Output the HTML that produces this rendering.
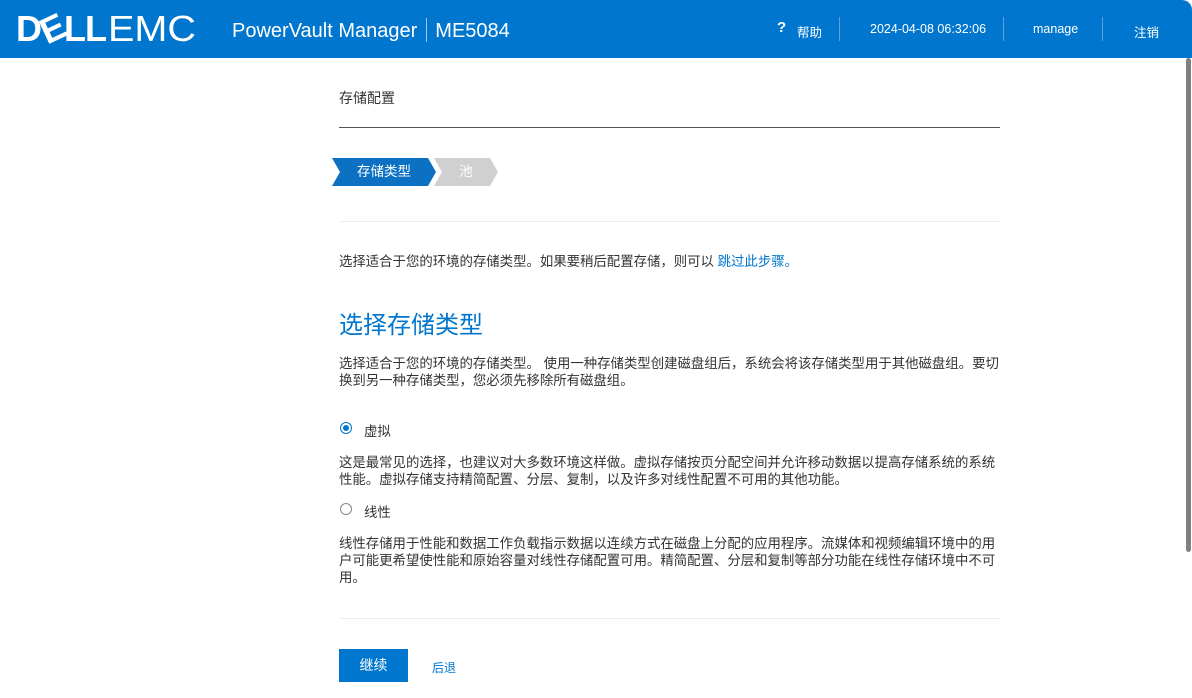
<!DOCTYPE html>
<html><head><meta charset="utf-8">
<style>
*{margin:0;padding:0;box-sizing:border-box}
body{width:1192px;height:698px;overflow:hidden;background:#fff;font-family:"Liberation Sans","Noto Sans CJK SC",sans-serif;color:#333;position:relative}
.hdr{position:absolute;left:0;top:0;width:1192px;height:58px;background:#0076ce;color:#fff;border-top-right-radius:10px}
.logo{position:absolute;left:16px;top:9px;font-size:36px;font-weight:bold;letter-spacing:-1px;line-height:40px}
.logo .emc{font-weight:normal;letter-spacing:0;display:inline-block;transform:scaleX(1.1);transform-origin:left;margin-left:2px}
.title{position:absolute;left:232px;top:18px;font-size:20px}
.sep{display:inline-block;width:1px;height:24px;background:#9cc8ec;vertical-align:-5px;margin:0 8px 0 9px}
.nav{position:absolute;top:22px;font-size:12.5px}
.vs{position:absolute;top:17px;width:1px;height:24px;background:#5aa2df}
.c{position:absolute;left:339px;width:661px;font-size:13.4px;line-height:17px}
.blue{color:#0076ce}
.scroll{position:absolute;left:1186px;top:58px;width:5px;height:494px;background:#808080;border-radius:3px}
.radio{position:absolute;left:340px;width:12px;height:12px;border-radius:50%;border:1px solid #888;background:#fff}
.radio.on{border-color:#0076ce}
.radio.on::after{content:"";position:absolute;left:2px;top:2px;width:6px;height:6px;border-radius:50%;background:#0076ce}
</style></head><body>
<div class="hdr">
 <div class="logo">D<span style="display:inline-block;transform:rotate(-25deg)">E</span>LL<span class="emc">EMC</span></div>
 <div class="title">PowerVault Manager<span class="sep"></span>ME5084</div>
 <div class="nav" style="left:777px;top:19px;font-size:15px;font-weight:bold">?</div>
 <div class="nav" style="left:797px">帮助</div>
 <div class="vs" style="left:839px"></div>
 <div class="nav" style="left:870px">2024-04-08 06:32:06</div>
 <div class="vs" style="left:1003px"></div>
 <div class="nav" style="left:1033px">manage</div>
 <div class="vs" style="left:1102px"></div>
 <div class="nav" style="left:1134px">注销</div>
</div>
<div class="scroll"></div>

<div class="c" style="top:90px;font-size:14px">存储配置</div>
<div style="position:absolute;left:339px;top:127px;width:661px;height:1px;background:#555"></div>

<svg style="position:absolute;left:330px;top:157px" width="170" height="30">
 <polygon points="2,1 98,1 106,15 98,29 2,29 10,15" fill="#0c71c3"/>
 <polygon points="104,1 160,1 168,15 160,29 104,29 112,15" fill="#d0d0d0"/>
 <text x="54" y="19" fill="#fff" font-size="13.5" text-anchor="middle" font-family="Liberation Sans,Noto Sans CJK SC,sans-serif">存储类型</text>
 <text x="136" y="19" fill="#fff" font-size="13.5" text-anchor="middle" font-family="Liberation Sans,Noto Sans CJK SC,sans-serif">池</text>
</svg>
<div style="position:absolute;left:339px;top:221px;width:661px;height:1px;background:#eee"></div>

<div class="c" style="top:253px">选择适合于您的环境的存储类型。如果要稍后配置存储，则可以 <span class="blue">跳过此步骤。</span></div>
<div class="c blue" style="top:310px;font-size:24px;line-height:32px">选择存储类型</div>
<div class="c" style="top:355px">选择适合于您的环境的存储类型。 使用一种存储类型创建磁盘组后，系统会将该存储类型用于其他磁盘组。要切换到另一种存储类型，您必须先移除所有磁盘组。</div>

<div class="radio on" style="top:422px"></div>
<div class="c" style="left:364px;top:423px">虚拟</div>
<div class="c" style="top:454px">这是最常见的选择，也建议对大多数环境这样做。虚拟存储按页分配空间并允许移动数据以提高存储系统的系统性能。虚拟存储支持精简配置、分层、复制，以及许多对线性配置不可用的其他功能。</div>
<div class="radio" style="top:503px"></div>
<div class="c" style="left:364px;top:504px">线性</div>
<div class="c" style="top:535px">线性存储用于性能和数据工作负载指示数据以连续方式在磁盘上分配的应用程序。流媒体和视频编辑环境中的用户可能更希望使性能和原始容量对线性存储配置可用。精简配置、分层和复制等部分功能在线性存储环境中不可用。</div>

<div style="position:absolute;left:339px;top:618px;width:661px;height:1px;background:#eee"></div>
<div style="position:absolute;left:339px;top:649px;width:69px;height:33px;background:#0076ce;color:#fff;font-size:14px;text-align:center;line-height:33px">继续</div>
<div style="position:absolute;left:432px;top:659px;font-size:12px" class="blue">后退</div>
</body></html>
